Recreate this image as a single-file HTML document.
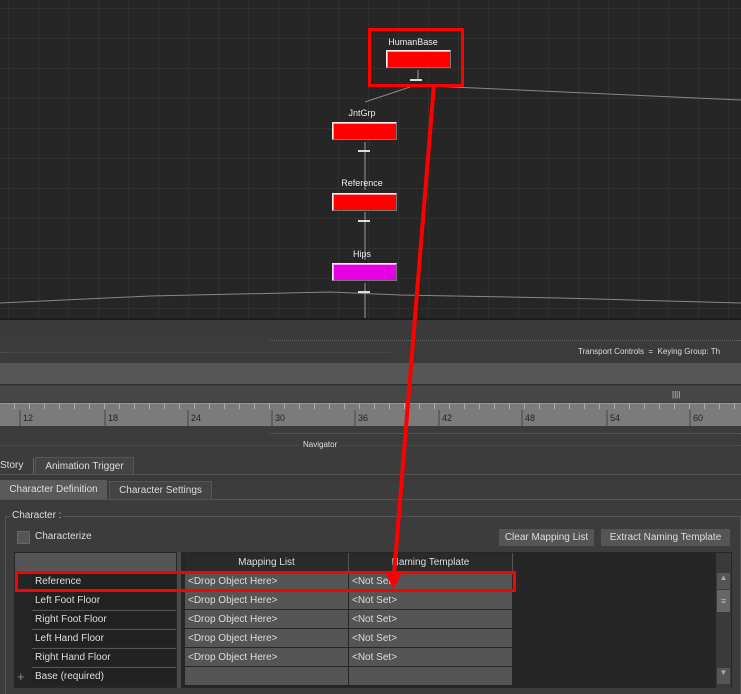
<html><head><style>
body{margin:0;width:741px;height:693px;overflow:hidden;background:#3c3c3c;font-family:"Liberation Sans",sans-serif;font-size:10px;color:#ddd;position:relative}
.a{position:absolute}
.node{position:absolute;width:65px;height:18px;border:1px solid #eee;border-right-color:#777;border-bottom-color:#777;box-sizing:border-box;box-shadow:inset 1px 1px 0 #f99}
.lbl{position:absolute;font-size:9px;color:#eee;text-align:center;width:80px}
.cb{position:absolute;width:12px;height:2px;background:#ddd}
.cell{position:absolute;height:18px;line-height:20px;box-sizing:border-box;font-size:10px;color:#ddd}
</style></head><body>
<div class="a" style="left:0;top:0;width:741px;height:318px;background-color:#262626;background-image:linear-gradient(#303030 1px,transparent 1px),linear-gradient(90deg,#303030 1px,transparent 1px);background-size:30px 30px;background-position:8px 8px"></div>
<svg class="a" style="left:0;top:0" width="741" height="320">
<polyline points="0,303 150,296 330,292 400,295 560,298 741,303" fill="none" stroke="#888" stroke-width="1"/>
<line x1="410" y1="87" x2="365" y2="102" stroke="#888"/>
<line x1="430" y1="86" x2="741" y2="100" stroke="#888"/>
<line x1="418" y1="70" x2="418" y2="80" stroke="#999"/>
<line x1="365" y1="142" x2="365" y2="190" stroke="#999"/>
<line x1="365" y1="212" x2="365" y2="260" stroke="#999"/>
<line x1="365" y1="283" x2="365" y2="318" stroke="#999"/>
</svg>
<div class="lbl" style="left:373px;top:37px">HumanBase</div>
<div class="node" style="left:386px;top:50px;background:#f00"></div>
<div class="cb" style="left:410px;top:79px"></div>
<div class="lbl" style="left:322px;top:108px">JntGrp</div>
<div class="node" style="left:332px;top:122px;background:#f00"></div>
<div class="cb" style="left:358px;top:150px"></div>
<div class="lbl" style="left:322px;top:178px">Reference</div>
<div class="node" style="left:332px;top:193px;background:#f00"></div>
<div class="cb" style="left:358px;top:220px"></div>
<div class="lbl" style="left:322px;top:249px">Hips</div>
<div class="node" style="left:332px;top:263px;background:#e600e6;box-shadow:inset 1px 1px 0 #f9f"></div>
<div class="cb" style="left:358px;top:291px"></div>
<div class="a" style="left:368px;top:28px;width:90px;height:53px;border:3px solid #f00"></div>

<div class="a" style="left:0;top:318px;width:741px;height:17px;background:#3a3a3a;border-top:2px solid #1c1c1c;border-bottom:1px solid #5a5a5a"></div>
<div class="a" style="left:0;top:336px;width:741px;height:26px;background:#3b3b3b"></div>
<div class="a" style="left:270px;top:340px;width:471px;border-top:1px dotted #666"></div>
<div class="a" style="left:0;top:352px;width:390px;border-top:1px dotted #555"></div>
<div class="a" style="left:578px;top:347px;font-size:8px;color:#ddd;white-space:nowrap">Transport Controls &nbsp;=&nbsp; Keying Group: Th</div>
<div class="a" style="left:0;top:363px;width:741px;height:21px;background:#565656;border-bottom:1px solid #2e2e2e"></div>
<div class="a" style="left:0;top:386px;width:741px;height:16px;background:#474747"></div>
<div class="a" style="left:672px;top:390px;font-size:8px;color:#ccc">||||</div>
<div class="a" style="left:0;top:403px;width:741px;height:23px;background:#7b7b7b;border-top:1px solid #999"></div>
<div class="a" style="left:0;top:403px;width:741px;height:6px;background:repeating-linear-gradient(90deg,transparent 0 14px,#aaa 14px 15px)"></div>
<div class="a" style="left:0;top:426px;width:741px;height:31px;background:#3c3c3c"></div>
<div class="a" style="left:270px;top:433px;width:471px;border-top:1px dotted #666"></div>
<div class="a" style="left:0;top:445px;width:741px;border-top:1px dotted #555"></div>
<div class="a" style="left:300px;top:440px;font-size:8px;color:#ddd;background:#3c3c3c;padding:0 3px">Navigator</div>
<div class="a" style="left:0;top:458px;width:33px;height:16px;line-height:16px;color:#ddd;border-right:1px solid #666">Story</div>
<div class="a" style="left:35px;top:457px;width:97px;height:17px;line-height:17px;text-align:center;color:#ddd;background:#444;border:1px solid #555;border-bottom:none">Animation Trigger</div>
<div class="a" style="left:0;top:474px;width:741px;height:6px;background:#3a3a3a;border-top:1px solid #555"></div>
<div class="a" style="left:0;top:480px;width:107px;height:19px;line-height:19px;text-align:center;background:#5a5a5a;color:#ddd">Character Definition</div>
<div class="a" style="left:109px;top:481px;width:101px;height:18px;line-height:18px;text-align:center;background:#444;border:1px solid #555;color:#ddd">Character Settings</div>
<div class="a" style="left:0;top:499px;width:741px;height:194px;background:#3c3c3c;border-top:1px solid #555"></div>
<div class="a" style="left:5px;top:516px;width:734px;height:177px;border:1px solid #555;border-bottom:none"></div>
<div class="a" style="left:10px;top:510px;background:#3c3c3c;padding:0 2px">Character :</div>
<div class="a" style="left:17px;top:531px;width:11px;height:11px;background:#555;border:1px solid #666"></div>
<div class="a" style="left:35px;top:531px">Characterize</div>
<div class="a" style="left:499px;top:529px;width:95px;height:17px;line-height:17px;text-align:center;background:#555">Clear Mapping List</div>
<div class="a" style="left:601px;top:529px;width:129px;height:17px;line-height:17px;text-align:center;background:#555">Extract Naming Template</div>

<div class="a" style="left:14px;top:552px;width:718px;height:136px;background:#262626"></div>
<div class="a" style="left:15px;top:553px;width:161px;height:18px;background:#555"></div>
<div class="a" style="left:177px;top:552px;width:4px;height:136px;background:#4a4a4a"></div>
<div class="cell" style="left:185px;top:553px;width:164px;background:#2a2a2a;text-align:center;border-right:1px solid #555">Mapping List</div>
<div class="cell" style="left:349px;top:553px;width:164px;background:#2a2a2a;text-align:center;border-right:1px solid #555">Naming Template</div>
<div class="a" style="left:716px;top:553px;width:15px;height:135px;background:#3a3a3a"></div>
<div class="a" style="left:717px;top:573px;width:13px;height:16px;background:#555;color:#aaa;font-size:8px;text-align:center">▲</div>
<div class="a" style="left:717px;top:590px;width:13px;height:22px;background:#666;color:#bbb;font-size:9px;text-align:center;line-height:22px">≡</div>
<div class="a" style="left:717px;top:668px;width:13px;height:16px;background:#555;color:#aaa;font-size:8px;text-align:center">▼</div>

<div class="cell" style="left:32px;top:572px;width:144px;background:#222;padding-left:3px">Reference</div>
<div class="cell" style="left:32px;top:591px;width:144px;background:#222;padding-left:3px;border-top:1px solid #555;line-height:18px">Left Foot Floor</div>
<div class="cell" style="left:32px;top:610px;width:144px;background:#222;padding-left:3px;border-top:1px solid #555;line-height:18px">Right Foot Floor</div>
<div class="cell" style="left:32px;top:629px;width:144px;background:#222;padding-left:3px;border-top:1px solid #555;line-height:18px">Left Hand Floor</div>
<div class="cell" style="left:32px;top:648px;width:144px;background:#222;padding-left:3px;border-top:1px solid #555;line-height:18px">Right Hand Floor</div>
<div class="cell" style="left:32px;top:667px;width:144px;background:#222;padding-left:3px;border-top:1px solid #555;line-height:18px">Base (required)</div>
<div class="a" style="left:17px;top:669px;color:#888;font-size:13px">+</div>

<div class="cell" style="left:185px;top:572px;width:163px;background:#555;padding-left:3px">&lt;Drop Object Here&gt;</div>
<div class="cell" style="left:349px;top:572px;width:163px;background:#555;padding-left:3px">&lt;Not Set&gt;</div>
<div class="cell" style="left:185px;top:591px;width:163px;background:#555;padding-left:3px">&lt;Drop Object Here&gt;</div>
<div class="cell" style="left:349px;top:591px;width:163px;background:#555;padding-left:3px">&lt;Not Set&gt;</div>
<div class="cell" style="left:185px;top:610px;width:163px;background:#555;padding-left:3px">&lt;Drop Object Here&gt;</div>
<div class="cell" style="left:349px;top:610px;width:163px;background:#555;padding-left:3px">&lt;Not Set&gt;</div>
<div class="cell" style="left:185px;top:629px;width:163px;background:#555;padding-left:3px">&lt;Drop Object Here&gt;</div>
<div class="cell" style="left:349px;top:629px;width:163px;background:#555;padding-left:3px">&lt;Not Set&gt;</div>
<div class="cell" style="left:185px;top:648px;width:163px;background:#555;padding-left:3px">&lt;Drop Object Here&gt;</div>
<div class="cell" style="left:349px;top:648px;width:163px;background:#555;padding-left:3px">&lt;Not Set&gt;</div>
<div class="cell" style="left:185px;top:667px;width:163px;background:#555"></div>
<div class="cell" style="left:349px;top:667px;width:163px;background:#555"></div>

<div class="a" style="left:15px;top:571px;width:495px;height:15px;border:3px solid #f00"></div>

<svg class="a" style="left:0;top:0" width="741" height="693">
<g font-family="Liberation Sans" font-size="9" fill="#222">
<text x="23" y="421">12</text><text x="108" y="421">18</text><text x="191" y="421">24</text><text x="275" y="421">30</text><text x="358" y="421">36</text><text x="442" y="421">42</text><text x="525" y="421">48</text><text x="610" y="421">54</text><text x="693" y="421">60</text>
</g>
<g stroke="#444"><line x1="20" y1="410" x2="20" y2="426"/><line x1="105" y1="410" x2="105" y2="426"/><line x1="188" y1="410" x2="188" y2="426"/><line x1="272" y1="410" x2="272" y2="426"/><line x1="355" y1="410" x2="355" y2="426"/><line x1="439" y1="410" x2="439" y2="426"/><line x1="522" y1="410" x2="522" y2="426"/><line x1="607" y1="410" x2="607" y2="426"/><line x1="690" y1="410" x2="690" y2="426"/></g>
<line x1="434" y1="84" x2="394" y2="575" stroke="#f00" stroke-width="4"/>
<polygon points="385,571 403,572 393,589" fill="#f00"/>
</svg>
</body></html>
